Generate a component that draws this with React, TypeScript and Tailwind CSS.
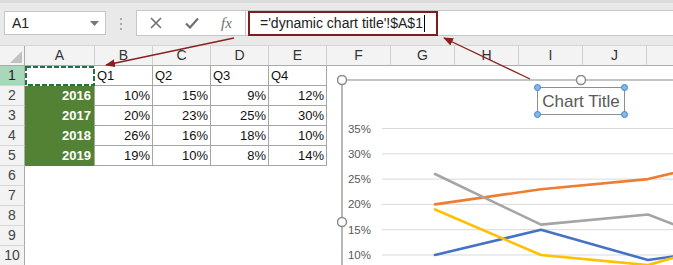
import React from "react"

const font = { fontFamily: '"Liberation Sans", Arial, sans-serif' }

const cols = [
  { l: "A", w: "w-[70px]" },
  { l: "B", w: "w-[58px]" },
  { l: "C", w: "w-[58px]" },
  { l: "D", w: "w-[58px]" },
  { l: "E", w: "w-[58px]" },
  { l: "F", w: "w-[64px]" },
  { l: "G", w: "w-[64px]" },
  { l: "H", w: "w-[64px]" },
  { l: "I", w: "w-[64px]" },
  { l: "J", w: "w-[64px]" },
]

const data = [
  { year: "2016", vals: [10, 15, 9, 12], color: "#4472c4" },
  { year: "2017", vals: [20, 23, 25, 30], color: "#ed7d31" },
  { year: "2018", vals: [26, 16, 18, 10], color: "#a5a5a5" },
  { year: "2019", vals: [19, 10, 8, 14], color: "#ffc000" },
]

// chart coords, origin at the chart's top-left corner
const yOf = (v: number) => 175 - (v - 10) * 5.06
const xs = [93, 199, 306, 412]

function Toolbar() {
  return (
    <div className="flex h-[45px] flex-none flex-col bg-[#e9e9e9]">
      <div className="h-[3px] bg-[#dcdcdc]" />
      <div className="flex flex-1 items-start pt-[7px]">
        <div className="ml-[4px] mt-[1px] flex h-[24px] w-[102px] items-center justify-between border border-[#c6c6c6] bg-white pl-[7px] pr-[6px] text-[14px] text-[#222]">
          <span>A1</span>
          <svg width="9" height="5" viewBox="0 0 9 5">
            <path d="M0 0h9L4.5 5z" fill="#777" />
          </svg>
        </div>
        <div className="flex w-[30px] flex-col items-center gap-[3px] pt-[8px]">
          <span className="h-[2px] w-[2px] bg-[#aaa]" />
          <span className="h-[2px] w-[2px] bg-[#aaa]" />
          <span className="h-[2px] w-[2px] bg-[#aaa]" />
        </div>
        <div className="flex h-[26px] w-[110px] items-center border border-[#c6c6c6] bg-white pl-[13px] text-[#707070]">
          <svg width="12" height="12" viewBox="0 0 12 12">
            <path d="M1 1l10 10M11 1L1 11" stroke="#707070" strokeWidth="1.6" />
          </svg>
          <svg className="ml-[23px]" width="14" height="12" viewBox="0 0 14 12">
            <path d="M1 6.5l4 4L13 1.5" stroke="#707070" strokeWidth="2.2" fill="none" />
          </svg>
          <span className="ml-[22px] text-[15px] italic" style={{ fontFamily: '"Liberation Serif", serif' }}>
            fx
          </span>
        </div>
        <div className="flex h-[26px] flex-1 items-center border-y border-[#c6c6c6] bg-white pl-[2px]">
          <div className="flex h-[25px] w-[190px] items-center border-2 border-[#7b1e1e] pl-[10px] text-[14px] text-[#222]">
            <span>='dynamic chart title'!$A$1</span>
            <span className="ml-[1px] h-[17px] w-px bg-black" />
          </div>
        </div>
      </div>
    </div>
  )
}

function HeaderRow() {
  return (
    <div className="flex h-[21px] flex-none border-t border-[#d5d5d5] bg-[#f3f3f3] text-[14px] text-[#333]">
      <div className="flex w-[25px] flex-none items-end justify-end border-r border-b border-[#ababab] p-[2px]">
        <svg width="12" height="12" viewBox="0 0 12 12">
          <path d="M12 0v12H0z" fill="#c2c2c2" />
        </svg>
      </div>
      {cols.map((c) => (
        <div
          key={c.l}
          className={`${c.w} flex flex-none items-center justify-center border-r border-b border-r-[#d0d0d0] border-b-[#ababab]`}
        >
          {c.l}
        </div>
      ))}
      <div className="min-w-0 flex-1 border-b border-[#ababab]" />
    </div>
  )
}

function A1Cell() {
  return (
    <div className="w-[70px] flex-none">
      <svg width="70" height="20" viewBox="0 0 70 20">
        <rect x="1" y="1" width="68" height="18" fill="white" stroke="#217346" strokeWidth="2" strokeDasharray="5 2" />
      </svg>
    </div>
  )
}

function Row({ r }: { r: number }) {
  const sel = r === 1
  const rec = r >= 2 && r <= 5 ? data[r - 2] : null
  return (
    <div className="flex h-[20px] flex-none text-[13px]">
      <div
        className={`flex w-[25px] flex-none items-center justify-center border-r border-b border-r-[#ababab] border-b-[#d5d5d5] text-[14px] ${
          sel ? "bg-[#a8d8b9] text-[#222]" : "bg-[#f3f3f3] text-[#444]"
        }`}
      >
        {r}
      </div>
      {r === 1 ? (
        <A1Cell />
      ) : rec ? (
        <div className="flex w-[70px] flex-none items-center justify-end border-r border-[#a6a6a6] bg-[#548235] pr-[3px] font-bold text-white">
          {rec.year}
        </div>
      ) : (
        <div className="w-[70px] flex-none" />
      )}
      {[0, 1, 2, 3].map((i) =>
        r <= 5 ? (
          <div
            key={i}
            className={`flex w-[58px] flex-none items-center border-r border-b border-[#a6a6a6] px-[2px] text-[#111] ${
              r === 1 ? "justify-start" : "justify-end"
            }`}
          >
            {r === 1 ? `Q${i + 1}` : `${rec!.vals[i]}%`}
          </div>
        ) : (
          <div key={i} className="w-[58px] flex-none" />
        )
      )}
    </div>
  )
}

function Chart() {
  return (
    <div className="absolute left-[337px] top-[75px] h-[190px] w-[336px]">
      <svg width="336" height="190" viewBox="-5 -5 336 190" style={font}>
        <rect x="0" y="0" width="340" height="200" fill="white" />
        <path d="M0 0H340M0 0V200" stroke="#8a8a8a" strokeWidth="1.2" />
        {[35, 30, 25, 20, 15, 10].map((v) => (
          <g key={v}>
            <line x1="40" x2="340" y1={yOf(v)} y2={yOf(v)} stroke="#d9d9d9" strokeWidth="1" />
            <text x="29" y={yOf(v) + 4} textAnchor="end" fontSize="11.5" fill="#595959">
              {v}%
            </text>
          </g>
        ))}
        {data.map((d) => (
          <polyline
            key={d.year}
            points={d.vals.map((v, i) => `${xs[i]},${yOf(v)}`).join(" ")}
            fill="none"
            stroke={d.color}
            strokeWidth="2.6"
            strokeLinejoin="round"
            strokeLinecap="round"
          />
        ))}
        {[
          [0, 0],
          [239, 0],
          [0, 142],
        ].map(([x, y], i) => (
          <circle key={i} cx={x} cy={y} r="4.5" fill="white" stroke="#8a8a8a" strokeWidth="1.5" />
        ))}
        <rect x="195.5" y="7.5" width="87" height="27" fill="white" stroke="#8f8f8f" strokeWidth="1" />
        <text x="239" y="27" textAnchor="middle" fontSize="17" fill="#595959">
          Chart Title
        </text>
        {[
          [195.5, 7.5],
          [282.5, 7.5],
          [195.5, 34.5],
          [282.5, 34.5],
        ].map(([x, y], i) => (
          <circle key={i} cx={x} cy={y} r="3" fill="#84b6e6" stroke="#3f86cc" strokeWidth="1" />
        ))}
      </svg>
    </div>
  )
}

function Arrows() {
  return (
    <svg className="pointer-events-none absolute inset-0" width="673" height="265" viewBox="0 0 673 265">
      <defs>
        <marker id="ah" viewBox="0 0 10 8" refX="9" refY="4" markerWidth="10" markerHeight="8" markerUnits="userSpaceOnUse" orient="auto">
          <path d="M0 0L10 4L0 8z" fill="#8b1f1f" />
        </marker>
      </defs>
      <line x1="234" y1="38" x2="106" y2="65" stroke="#8b1f1f" strokeWidth="1.3" markerEnd="url(#ah)" />
      <line x1="530" y1="79" x2="444" y2="38" stroke="#8b1f1f" strokeWidth="1.3" markerEnd="url(#ah)" />
    </svg>
  )
}

export default function App() {
  return (
    <div className="relative flex h-[265px] w-[673px] flex-col overflow-hidden bg-white" style={font}>
      <Toolbar />
      <HeaderRow />
      {[1, 2, 3, 4, 5, 6, 7, 8, 9, 10].map((r) => (
        <Row key={r} r={r} />
      ))}
      <Chart />
      <Arrows />
    </div>
  )
}
